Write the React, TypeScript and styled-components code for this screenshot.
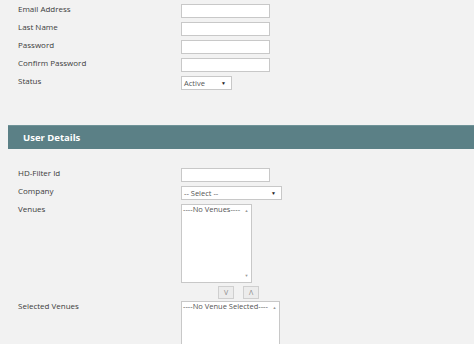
import React from 'react';
import styled, { createGlobalStyle } from 'styled-components';

const GlobalStyle = createGlobalStyle`
  html, body {
    margin: 0;
    padding: 0;
    background: #f2f2f2;
  }
  body {
    font-family: 'Open Sans', 'Noto Sans', sans-serif;
    color: #3a3a3a;
  }
`;

const Page = styled.div`
  width: 474px;
  height: 344px;
  overflow: hidden;
  background: #f2f2f2;
`;

const Section = styled.div<{ top: number }>`
  display: flex;
  flex-direction: column;
  gap: 4px;
  padding-top: ${(p) => p.top}px;
`;

const Row = styled.div`
  display: flex;
  align-items: flex-start;
`;

const Label = styled.div`
  width: 181px;
  padding-left: 18px;
  box-sizing: border-box;
  font-size: 8px;
  line-height: 10px;
  color: #3c3c3c;
`;

const TextBox = styled.div`
  width: 89px;
  height: 14px;
  box-sizing: border-box;
  background: #fff;
  border: 1px solid #c8c8c8;
`;

const Select = styled.div<{ w: number }>`
  width: ${(p) => p.w}px;
  height: 14px;
  box-sizing: border-box;
  background: #fff;
  border: 1px solid #c8c8c8;
  display: flex;
  align-items: center;
  justify-content: space-between;
  padding: 0 5px 0 2px;
  font-size: 7.5px;
  color: #555;
`;

const Arrow = styled.span`
  font-size: 5px;
  color: #222;
`;

const Header = styled.div`
  margin: 35px 0 19px 8px;
  height: 24px;
  background: #5b8086;
  border-top: 1px solid #6f9398;
  box-sizing: border-box;
  display: flex;
  align-items: center;
  padding-left: 15px;
  color: #fff;
  font-weight: 700;
  font-size: 9.5px;
`;

const ListBox = styled.div<{ w: number; h: number }>`
  width: ${(p) => p.w}px;
  height: ${(p) => p.h}px;
  box-sizing: border-box;
  background: #fff;
  border: 1px solid #c8c8c8;
  display: flex;
`;

const ListItems = styled.div`
  flex: 1;
  font-size: 7.5px;
  line-height: 9px;
  color: #555;
  padding-left: 1px;
  white-space: nowrap;
`;

const ScrollBar = styled.div`
  width: 9px;
  display: flex;
  flex-direction: column;
  justify-content: space-between;
  align-items: center;
  font-size: 4px;
  color: #999;
  padding: 3px 0 4px;
`;

const MoveRow = styled.div`
  display: flex;
  gap: 9px;
  padding-left: 218px;
  margin: -1px 0 -2px;
`;

const MoveButton = styled.div`
  width: 16px;
  height: 13px;
  box-sizing: border-box;
  border: 1px solid #cfcfcf;
  background: #ececec;
  color: #8a8a8a;
  font-size: 7px;
  display: flex;
  align-items: center;
  justify-content: center;
`;

const Field = ({ label, children }: { label: string; children: React.ReactNode }) => (
  <Row>
    <Label>{label}</Label>
    {children}
  </Row>
);

const App = () => {
  return (
    <Page>
      <GlobalStyle />
      <Section top={4}>
        <Field label="Email Address"><TextBox /></Field>
        <Field label="Last Name"><TextBox /></Field>
        <Field label="Password"><TextBox /></Field>
        <Field label="Confirm Password"><TextBox /></Field>
        <Field label="Status">
          <Select w={51}>Active<Arrow>▼</Arrow></Select>
        </Field>
      </Section>
      <Header>User Details</Header>
      <Section top={0}>
        <Field label="HD-Filter Id"><TextBox /></Field>
        <Field label="Company">
          <Select w={101}>-- Select --<Arrow>▼</Arrow></Select>
        </Field>
        <Field label="Venues">
          <ListBox w={71} h={79}>
            <ListItems>----No Venues----</ListItems>
            <ScrollBar><span>▲</span><span>▼</span></ScrollBar>
          </ListBox>
        </Field>
        <MoveRow>
          <MoveButton>V</MoveButton>
          <MoveButton>Λ</MoveButton>
        </MoveRow>
        <Field label="Selected Venues">
          <ListBox w={99} h={60}>
            <ListItems>----No Venue Selected----</ListItems>
            <ScrollBar><span>▲</span></ScrollBar>
          </ListBox>
        </Field>
      </Section>
    </Page>
  );
};

export default App;
